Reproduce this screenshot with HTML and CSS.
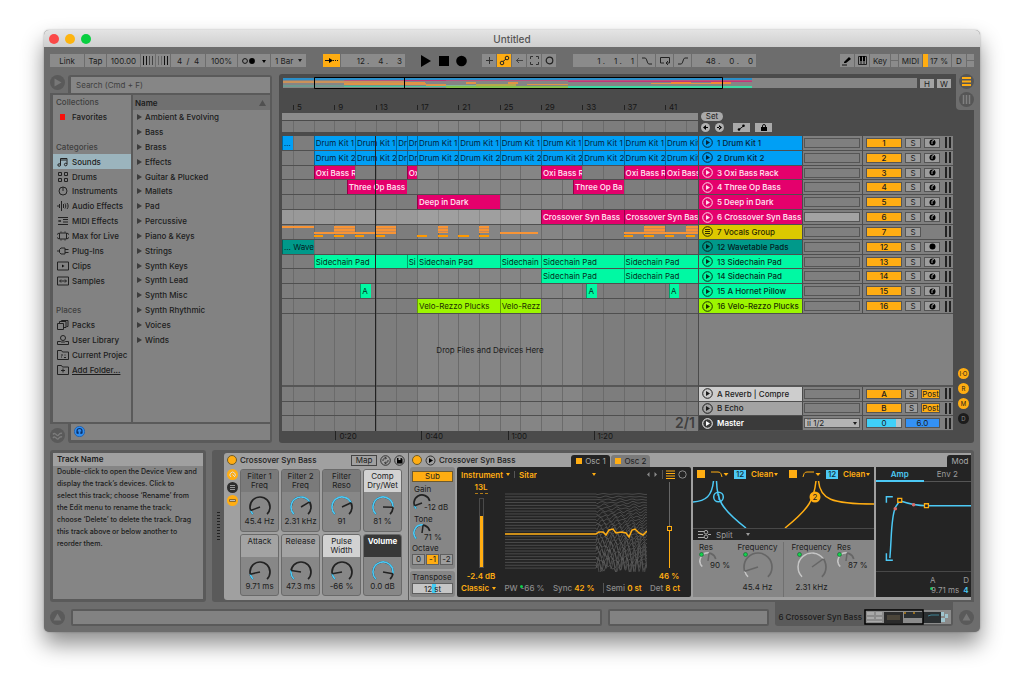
FILE: index.html
```html
<!DOCTYPE html>
<html lang="en">
<head>
    <meta charset="UTF-8">
    <meta name="viewport" content="width=device-width, initial-scale=1.0">
    <title>Untitled</title>
    <link rel="stylesheet" href="styles.css">
</head>
<body>

<div class="window">
    <header class="titlebar">
        <span class="light red"></span>
        <span class="light yellow"></span>
        <span class="light green"></span>
        <h1>Untitled</h1>
    </header>

    <!-- Control bar -->
    <div class="toolbar">
        <div class="group">
            <button class="tool link">Link</button>
            <button class="tool tap">Tap</button>
            <input class="tool tempo" aria-label="Tempo" value="100.00">
            <button class="tool" aria-label="Nudge down"><svg width="10" height="9"><path d="M.5 0v9M3.5 0v9" stroke="#111"/><path d="M6.5 0v9M9.5 0v9" stroke="#444"/></svg></button>
            <button class="tool" aria-label="Nudge up"><svg width="10" height="9"><path d="M.5 0v9M3.5 0v9" stroke="#666"/><path d="M6.5 0v9M9.5 0v9" stroke="#111"/></svg></button>
            <button class="tool link">4&nbsp; /&nbsp; 4</button>
            <button class="tool amount">100%</button>
            <button class="tool metro" aria-label="Metronome"><svg width="26" height="8"><circle cx="4" cy="4" r="2.4" fill="none" stroke="#111"/><circle cx="11" cy="4" r="2.9"/><path d="M21 3h4l-2 3z"/></svg></button>
            <span class="drop tool quant"><select aria-label="Quantization"><option>1 Bar</option></select></span>
        </div>
        <div class="group after-wide">
            <button class="tool follow on" aria-label="Follow"><svg width="13" height="7"><path d="M0 3.5h6" stroke="#111"/><path d="M4 1l4 2.5-4 2.5z"/><path d="M8 3.5h5" stroke="#111" stroke-dasharray="1 1"/></svg></button>
            <button class="tool position">12 .&nbsp;&nbsp;&nbsp; 4 .&nbsp;&nbsp;&nbsp; 3</button>
        </div>
        <div class="group transport">
            <button aria-label="Play"><svg width="12" height="12"><path d="M1 0l10 6-10 6z"/></svg></button>
            <button aria-label="Stop"><svg width="10" height="12"><path d="M0 1h10v10H0z"/></svg></button>
            <button aria-label="Record"><svg width="11" height="12"><circle cx="5.5" cy="6" r="5.3"/></svg></button>
        </div>
        <div class="group after">
            <button class="tool" aria-label="Overdub"><svg width="9" height="9"><path d="M4.5 1v7M1 4.5h7" stroke="#333"/></svg></button>
            <button class="tool on" aria-label="Automation arm"><svg width="11" height="11" fill="none" stroke="#222"><circle cx="3" cy="8" r="1.8"/><circle cx="8" cy="3" r="1.8"/><path d="M4 6.5L7 4"/></svg></button>
            <button class="tool" aria-label="Re-enable automation"><svg width="9" height="9" fill="none" stroke="#444"><path d="M1 4.5h7M4 2L1.5 4.5 4 7"/></svg></button>
            <button class="tool" aria-label="Capture"><svg width="9" height="9" fill="none" stroke="#333"><path d="M.5 3V.5H3M6 .5h2.500V3M8.500 6v2.500H6M3 8.500H.5V6"/></svg></button>
            <button class="tool" aria-label="Session record"><svg width="9" height="9"><circle cx="4.5" cy="4.5" r="3.3" fill="none" stroke="#222" stroke-width="1.200"/></svg></button>
        </div>
        <div class="group after-wide">
            <button class="tool position">1 .&nbsp;&nbsp;&nbsp; 1 .&nbsp;&nbsp;&nbsp; 1</button>
            <button class="tool punch" aria-label="Punch in"><svg width="12" height="8" fill="none" stroke="#222"><path d="M1 1h3c2 0 2 6 4 6h3"/></svg></button>
            <button class="tool punch" aria-label="Loop"><svg width="12" height="9" fill="none" stroke="#222"><path d="M5 7H1.5V1.5h9V7H7.5M9 5L7 7l2 2"/></svg></button>
            <button class="tool punch" aria-label="Punch out"><svg width="12" height="8" fill="none" stroke="#222"><path d="M1 7h3c2 0 2-6 4-6h3"/></svg></button>
            <button class="tool position">48 .&nbsp;&nbsp;&nbsp; 0 .&nbsp;&nbsp;&nbsp; 0</button>
        </div>
        <div class="group end">
            <button class="tool" aria-label="Draw mode"><svg width="10" height="10"><path d="M2 6l5-5 2 2-5 4H2z"/><path d="M0 9h5" stroke="#111"/></svg></button>
            <button class="tool" aria-label="Computer keyboard"><svg width="9" height="9"><path d="M.5.5h8v8h-8zM3 1v7M6 1v7" fill="none" stroke="#222"/><path d="M2 0h2v5H2zM5 0h2v5H5z"/></svg></button>
            <button class="tool key">Key</button>
            <span class="leds"></span>
            <button class="tool midi">MIDI</button>
            <button class="tool cpu">17 %</button>
            <button class="tool">D</button>
            <span class="leds"></span>
        </div>
    </div>

    <main class="upper">
        <!-- Browser -->
        <aside class="browser">
            <div class="browser-top">
                <button class="round" aria-label="Hide browser"><svg width="15" height="15"><circle cx="7.5" cy="7.5" r="7.5" fill="#5a5a5a"/><path d="M4.5 3.5l7 4-7 4z" fill="#777"/></svg></button>
                <div class="search"><input type="search" aria-label="Search" placeholder="Search (Cmd + F)"></div>
            </div>
            <div class="browser-body">
                <ul class="places">
                    <li class="head">Collections</li>
                    <li><a href="#"><svg width="12" height="10"><path d="M3 2h5v6H3z" fill="#f8100c"/></svg>Favorites</a></li>
                    <li></li>
                    <li class="head">Categories</li>
                    <li class="selected"><a href="#"><svg width="12" height="10"><path d="M3.5 8V1.5h6.500V7M3.500 3h6"/><circle cx="2.2" cy="8" r="1.3"/><circle cx="8.7" cy="7.5" r="1.3"/></svg>Sounds</a></li>
                    <li><a href="#"><svg width="12" height="10"><path d="M1.500.5h3v3h-3zM7.500.5h3v3h-3zM1.500 6.500h3v3h-3zM7.500 6.500h3v3h-3z"/></svg>Drums</a></li>
                    <li><a href="#"><svg width="12" height="10"><circle cx="6" cy="5" r="4"/><path d="M6 1v4"/></svg>Instruments</a></li>
                    <li><a href="#"><svg width="12" height="10"><path d="M0 5h2M2.500 3v4M4.500 0v10M6.500 3v4M8 2.500c1 1 1 4 0 5M10 2c1.500 1.500 1.500 4.500 0 6"/></svg>Audio Effects</a></li>
                    <li><a href="#"><svg width="12" height="10"><path d="M1 1.500h10M1 8.500h10M1 5h3M3 4v2M6 3.500h5M6 6h5"/></svg>MIDI Effects</a></li>
                    <li><a href="#"><svg width="12" height="10"><path d="M2.500 2h7v6h-7zM0 3.500l2-1.500M0 6.500L2 8M12 3.500L10 2M12 6.500L10 8M4 .5v1M8 .5v1M4 8.500v1M8 8.500v1"/></svg>Max for Live</a></li>
                    <li><a href="#"><svg width="12" height="10"><path d="M0 5h2.500M4 2h4v6H4L2.500 6.500v-3zM8 3.500h3.500M8 6.500h3.500"/></svg>Plug-Ins</a></li>
                    <li><a href="#"><svg width="12" height="10"><path d="M.5 1h11v8H.5z"/><path d="M5 3.500L7.500 5 5 6.500z" fill="#111"/></svg>Clips</a></li>
                    <li><a href="#"><svg width="12" height="10"><path d="M.5 1h11v8H.5zM2 5h2M4 3.500v3M6 4v2M8 3.500v3M8 5h2"/></svg>Samples</a></li>
                    <li></li>
                    <li class="head">Places</li>
                    <li><a href="#"><svg width="12" height="10"><path d="M.5 3.500h6v6h-6zM2.500 3V1.500h6.500v6H7M4.500 1V.5H11v6H9.500"/></svg>Packs</a></li>
                    <li><a href="#"><svg width="12" height="10"><circle cx="6" cy="3" r="2.5"/><path d="M.5 9.500v-3h3l1 .5h3l1-.5h3v3z"/></svg>User Library</a></li>
                    <li><a href="#"><svg width="12" height="10"><path d="M.5 9.500v-9h4l1 1.500h6v7.500zM4 5h2M7.500 5h1M4 7h1M7 7.500h2"/></svg>Current Projec</a></li>
                    <li><a href="#"><svg width="12" height="10"><path d="M.5 9.500v-9h4l1 1.500h6v7.500zM6 3.500v4M4 5.500h4"/></svg><u>Add Folder...</u></a></li>
                </ul>
                <div class="content">
                    <div class="name-head">Name <svg width="7" height="6"><path d="M3.500 0L7 6H0z" fill="#505050"/></svg></div>
                    <ul class="folders">
                        <li><a href="#">Ambient &amp; Evolving</a></li>
                        <li><a href="#">Bass</a></li>
                        <li><a href="#">Brass</a></li>
                        <li><a href="#">Effects</a></li>
                        <li><a href="#">Guitar &amp; Plucked</a></li>
                        <li><a href="#">Mallets</a></li>
                        <li><a href="#">Pad</a></li>
                        <li><a href="#">Percussive</a></li>
                        <li><a href="#">Piano &amp; Keys</a></li>
                        <li><a href="#">Strings</a></li>
                        <li><a href="#">Synth Keys</a></li>
                        <li><a href="#">Synth Lead</a></li>
                        <li><a href="#">Synth Misc</a></li>
                        <li><a href="#">Synth Rhythmic</a></li>
                        <li><a href="#">Voices</a></li>
                        <li><a href="#">Winds</a></li>
                    </ul>
                </div>
            </div>
            <div class="browser-foot">
                <button class="round" aria-label="Groove pool"><svg width="15" height="15"><circle cx="7.5" cy="7.5" r="7.5" fill="#5a5a5a"/><path d="M3 6.500c2-3 4 2 5 1s2-3 4-2M3 10c2-3 4 2 5 1s2-3 4-2" fill="none" stroke="#7c7c7c" stroke-width="1.4"/></svg></button>
                <div class="preview"><button aria-label="Preview"><svg width="11" height="11"><circle cx="5.5" cy="5.5" r="5.2" fill="#2f8df0" stroke="#1b4f94" stroke-width=".6"/><path d="M3 7.500V5a2.500 2.500 0 015 0v2.500M4 5.500v2.500M7 5.500v2.500" fill="none" stroke="#0b2f66" stroke-width="1.2"/></svg></button></div>
            </div>
        </aside>

        <!-- Arrangement -->
        <section class="arrangement">
            <div class="arr-main">
                <div class="overview-row">
                    <div class="overview"><svg id="overview" viewBox="0 0 634 12" preserveAspectRatio="none"></svg></div>
                    <button class="hw">H</button>
                    <button class="hw">W</button>
                </div>
                <div class="arr-cols">
                    <div class="timeline">
                        <div class="grid-layer" id="grid"></div>
                        <div class="ruler" id="ruler"></div>
                        <div class="scrub"></div>
                        <div class="locators"></div>
                        <div class="lanes" id="lanes"></div>
                        <div class="drop-area"><span>Drop Files and Devices Here</span></div>
                        <div class="returns">
                            <div class="lane"></div>
                            <div class="lane"></div>
                            <div class="lane last">2/1</div>
                        </div>
                        <div class="time-ruler" id="times"></div>
                    </div>
                    <div class="headers">
                        <div class="header-top">
                            <button class="set">Set</button>
                            <div class="set-row">
                                <button aria-label="Previous locator"><svg width="9" height="9"><circle cx="4.5" cy="4.5" r="4.5" fill="#b2b2b2"/><path d="M2 4.500L5 2v5zM4 4h3v1H4z"/></svg></button>
                                <button aria-label="Next locator"><svg width="9" height="9"><circle cx="4.5" cy="4.5" r="4.5" fill="#b2b2b2"/><path d="M7 4.500L4 2v5zM2 4h3v1H2z"/></svg></button>
                                <button class="mini first" aria-label="Automation mode"><svg width="9" height="7"><path d="M2 5.500L6.500 2" stroke="#111"/><circle cx="2" cy="5.5" r="1.3"/><circle cx="6.5" cy="1.7" r="1.3"/></svg></button>
                                <button class="mini" aria-label="Lock envelopes"><svg width="8" height="7"><path d="M1 3h6v4H1z"/><path d="M2.500 3V2a1.500 1.500 0 013 0v1" fill="none" stroke="#111"/></svg></button>
                            </div>
                        </div>
                        <div class="track-list" id="tracks"></div>
                        <div class="header-gap"></div>
                        <div class="return-list" id="returns"></div>
                    </div>
                </div>
            </div>
            <div class="rail">
                <div class="views">
                    <button class="round" aria-label="Arrangement view"><svg width="15" height="15"><circle cx="7.5" cy="7.5" r="7.5" fill="#565656"/><path d="M3 4h9M3 7.500h9M3 11h9" stroke="#ffad12" stroke-width="2"/></svg></button>
                    <button class="round" aria-label="Session view"><svg width="15" height="15"><circle cx="7.5" cy="7.5" r="7.5" fill="#565656"/><path d="M4.500 3v9M7.500 3v9M10.500 3v9" stroke="#808080" stroke-width="1.5"/></svg></button>
                </div>
                <div class="toggles">
                    <button>I·O</button>
                    <button>R</button>
                    <button>M</button>
                    <button class="off">D</button>
                </div>
            </div>
        </section>
    </main>

    <!-- Info view and device chain -->
    <section class="lower">
        <div class="info">
            <h2>Track Name</h2>
            <p>Double-click to open the Device View and display the track’s devices. Click to<br>select this track; choose ‘Rename’ from<br>the Edit menu to rename the track;<br>choose ‘Delete’ to delete the track. Drag<br>this track above or below another to<br>reorder them.</p>
        </div>
        <div class="chain">
            <div class="grip"></div>
            <article class="rack">
                <header class="device-head">
                    <button class="power" aria-label="Device on"></button>
                    <h3>Crossover Syn Bass</h3>
                    <button class="map">Map</button>
                    <button aria-label="Hot-swap"><svg width="11" height="11" fill="none" stroke="#333"><circle cx="5.5" cy="5.5" r="4.800"/><path d="M3 6a2.500 2.500 0 013-3M8 5a2.500 2.500 0 01-3 3M5 2l1.500 1L5 4.500M6 6.500L4.500 8 6 9"/></svg></button>
                    <button aria-label="Save preset"><svg width="11" height="11"><circle cx="5.5" cy="5.5" r="4.800" fill="none" stroke="#333"/><path d="M3 3h4.500l1 1v4.500H3z"/><path d="M4.500 3h2v2h-2z" fill="#aaa"/></svg></button>
                </header>
                <div class="rack-body">
                    <div class="rack-side">
                        <button aria-label="Macros"><svg width="11" height="11"><circle cx="5.5" cy="5.5" r="5.5" fill="#ffad12"/><path d="M4 8a2.700 2.700 0 113.200 0M5.500 5.500L7 7" fill="none" stroke="#ddd"/></svg></button>
                        <button aria-label="Chains"><svg width="11" height="11"><circle cx="5.5" cy="5.5" r="5.5" fill="#2e2e2e"/><path d="M3 3.500h5M3 5.500h5M3 7.500h5" stroke="#999"/></svg></button>
                        <button aria-label="Devices"><svg width="11" height="11"><circle cx="5.5" cy="5.5" r="5.5" fill="#ffad12"/><path d="M2.500 4.500h6v2h-6z" fill="#bbb" stroke="#8a6a30"/></svg></button>
                    </div>
                    <div class="macros" id="macros"></div>
                </div>
            </article>

            <article class="synth">
                <header class="device-head">
                    <button class="power" aria-label="Device on"></button>
                    <button aria-label="Unfold"><svg width="11" height="11"><circle cx="5.5" cy="5.5" r="4.5" fill="none" stroke="#333"/><path d="M4 3l4 2.500L4 8z"/></svg></button>
                    <h3>Crossover Syn Bass</h3>
                    <div class="tabs">
                        <button class="active"><i></i>Osc 1</button>
                        <button><i></i>Osc 2</button>
                    </div>
                    <button class="mod">Mod</button>
                </header>
                <div class="synth-body">
                    <div class="sub-col">
                        <div class="card main-card">
                            <button class="sub">Sub</button>
                            <span class="label">Gain</span>
                            <div class="small-knob"><svg class="knob" width="18" height="18" data-value="0.12" data-sweep="210"></svg><output>-12 dB</output></div>
                            <span class="label">Tone</span>
                            <div class="small-knob"><svg class="knob" width="18" height="18" data-value="0.68" data-sweep="210"></svg><output>71 %</output></div>
                            <span class="label left">Octave</span>
                            <div class="octaves"><button>0</button><button class="on">-1</button><button>-2</button></div>
                        </div>
                        <div class="card low-card">
                            <label for="transpose">Transpose</label>
                            <input id="transpose" value="12 st">
                        </div>
                    </div>

                    <div class="osc">
                        <div class="osc-head">
                            <span class="drop"><select aria-label="Category"><option>Instrument</option></select></span>
                            <span class="bar"></span>
                            <span class="drop wide"><select aria-label="Wavetable"><option>Sitar</option></select></span>
                            <svg width="42" height="9" class="osc-icons"><path d="M0 4.500L2.500 2v5zM10 4.500L7.500 2v5z" fill="#8a8a8a"/><path d="M15.500 0v9" stroke="#555"/><path d="M19 1h9M19 3.500h9M19 6h9M19 8.500h9" stroke="#ffad12"/><circle cx="35.500" cy="4.5" r="3.700" fill="none" stroke="#8a8a8a"/></svg>
                        </div>
                        <div class="osc-main">
                            <div class="fader-col">
                                <output class="pan">13L</output>
                                <input class="fader" type="range" aria-label="Oscillator gain" value="74">
                                <output>-2.4 dB</output>
                            </div>
                            <svg id="waves" viewBox="0 0 142 80" preserveAspectRatio="none"></svg>
                            <div class="fader-col right">
                                <input class="fader thin" type="range" aria-label="Wavetable position" value="46">
                                <output>46 %</output>
                            </div>
                        </div>
                        <div class="osc-foot">
                            <span class="drop"><select aria-label="Effect mode"><option>Classic</option></select></span>
                            <span>PW <i></i>-66 %</span>
                            <span>Sync <b>42 %</b></span>
                            <span class="semi">Semi <b>0 st</b></span>
                            <span>Det <b>8 ct</b></span>
                        </div>
                    </div>

                    <div class="filters">
                        <div class="filter-head">
                            <div><i class="sq"></i><svg width="19" height="8"><path d="M1 2h7c3 0 3 2 4 5" fill="none" stroke="#ffad12"/><path d="M13.500 3h5L16 6z" fill="#ffad12"/></svg><b>12</b><span class="drop"><select aria-label="Filter 1 circuit"><option>Clean</option></select></span></div>
                            <div><i class="sq"></i><svg width="19" height="8"><path d="M1 7c1-3 1-5 4-5h7" fill="none" stroke="#ffad12"/><path d="M13.500 3h5L16 6z" fill="#ffad12"/></svg><b>12</b><span class="drop"><select aria-label="Filter 2 circuit"><option>Clean</option></select></span></div>
                        </div>
                        <svg class="curves" viewBox="0 0 181 47" preserveAspectRatio="none">
                            <g fill="none" stroke="#4cc9f5" stroke-width="1.5"><path d="M0 21C13 20 19 15 20.500 0M23.500 0C24 18 27 27 53 47"/><circle cx="25.5" cy="16" r="4.8"/></g>
                            <path d="M92 47C117 27 121 18 123 0M125.500 0C127 18 138 23 181 23" fill="none" stroke="#ffad12" stroke-width="1.5"/>
                            <circle cx="122" cy="16" r="5.5" fill="#ffad12"/>
                            <text x="25.500" y="19" fill="#4cc9f5">1</text>
                            <text x="122" y="19" fill="#222">2</text>
                        </svg>
                        <div class="routing">
                            <svg width="13" height="9" fill="none" stroke="#aaa"><path d="M0 1.500h6M0 4.500h5M0 7.500h6M10 4.500h3"/><circle cx="8" cy="2.2" r="1.8"/><circle cx="8" cy="6.8" r="1.8"/></svg>
                            <span class="drop"><select aria-label="Routing"><option>Split</option></select></span>
                        </div>
                        <div class="filter-knobs">
                            <div class="fk res"><span>Res</span><div><svg class="knob grey" width="18" height="18" data-value="0.68" data-sweep="210"></svg><output>90 %</output></div></div>
                            <div class="fk freq"><span>Frequency</span><svg class="knob grey" width="30" height="30" data-value="0.1"></svg><output>45.4 Hz</output></div>
                            <div class="fk freq second"><span>Frequency</span><svg class="knob grey" width="30" height="30" data-value="0.7"></svg><output>2.31 kHz</output></div>
                            <div class="fk res"><span>Res</span><div><svg class="knob grey" width="18" height="18" data-value="0.68" data-sweep="210"></svg><output>87 %</output></div></div>
                        </div>
                    </div>

                    <div class="env">
                        <div class="env-tabs"><button class="active">Amp</button><button>Env 2</button></div>
                        <svg class="env-graph" viewBox="0 0 96 90" preserveAspectRatio="xMinYMid slice">
                            <g fill="none" stroke="#4cc9f5" stroke-width="1.5">
                                <path d="M10.500 21v-6H17M10.500 72v7H17"/>
                                <path d="M14 77C16 55 15 34 20 25L24 19C36 23 42 24 51 24H120"/>
                            </g>
                            <g fill="#d96b6b"><circle cx="19.500" cy="27" r="1.8"/><circle cx="38" cy="23" r="1.8"/></g>
                            <g fill="#222" stroke="#ffad12" stroke-width="1.3"><path d="M22 16.500h4v4h-4zM49 22h4v4h-4z"/></g>
                        </svg>
                        <div class="env-vals">
                            <div><span>A</span><output><i></i>9.71 ms</output></div>
                            <div class="cut"><span>D</span><output>4</output></div>
                        </div>
                    </div>
                </div>
            </article>
        </div>
    </section>

    <footer class="status">
        <button class="round" aria-label="Hide info"><svg width="15" height="15"><circle cx="7.5" cy="7.5" r="7.5" fill="#5a5a5a"/><path d="M7.500 3.500l4 7h-8z" fill="#777"/></svg></button>
        <div class="box message"></div>
        <div class="box second"></div>
        <div class="device-tab">
            <span>6 Crossover Syn Bass</span>
            <svg width="88" height="16">
                <path d="M1 1h86v14H1z" fill="#8b8b8b"/>
                <path d="M3 3h7v3H3zM12 3h6v3h-6zM3 8h7v2H3zM12 8h6v2h-6zM3 12h15v1H3z" fill="#a9a9a9"/>
                <path d="M20 3h19v11H20z" fill="#2b2b2b"/>
                <path d="M23 6h13v5H23z" fill="#4b453a"/>
                <path d="M40 3h18v6H40zM59 3h18v11H59z" fill="#2b2f31"/>
                <path d="M40 4h2M49 4h2" stroke="#ffad12"/>
                <path d="M64 7l3-1h8" fill="none" stroke="#3f8294"/>
                <path d="M77 3h3v4h-3zM81 5h3v4h-3zM77 9h4v4h-4z" fill="#9ec3cd"/>
                <path d="M1 1h58v14H1z" fill="none" stroke="#000" stroke-width="1.5"/>
            </svg>
        </div>
        <button class="round" aria-label="Hide devices"><svg width="15" height="15"><circle cx="7.5" cy="7.5" r="7.5" fill="#5a5a5a"/><path d="M7.500 3.500l4 7h-8z" fill="#777"/></svg></button>
    </footer>
</div>

<script src="script.js"></script>
</body>
</html>
```
FILE: styles.css
```css
* {
    box-sizing: border-box;
}

body {
    margin: 0;
    padding: 30px 44px 58px;
    min-height: 100vh;
    display: flex;
    background-color: #fff;
    font-family: Inter, "Liberation Sans", sans-serif;
    font-size: 8px;
    line-height: 10px;
    color: #1c1c1c;
}

button,
input,
select {
    font: inherit;
    color: inherit;
    margin: 0;
    padding: 0;
    border: 0;
    border-radius: 0;
    background: none;
    appearance: none;
    outline: 0;
}

h1,
h2,
h3,
p,
ul {
    margin: 0;
    padding: 0;
    font-size: 8px;
    font-weight: 500;
    list-style: none;
}

a {
    color: inherit;
    text-decoration: none;
}

svg {
    display: block;
    flex: none;
}

.window {
    flex: 1;
    min-width: 0;
    display: flex;
    flex-direction: column;
    background-color: #6d6d6d;
    border-radius: 5px;
    box-shadow: 0 0 2px rgba(0, 0, 0, 0.3), 0 12px 22px rgba(0, 0, 0, 0.45);
}

.titlebar {
    display: flex;
    align-items: center;
    height: 17px;
    padding: 0 5px;
    gap: 6px;
    background: linear-gradient(#e4e4e4, #cecece);
    border-radius: 5px 5px 0 0;
}

.titlebar h1 {
    flex: 1;
    padding-right: 48px;
    text-align: center;
    font-size: 10px;
    color: #555;
}

.light {
    width: 10px;
    height: 10px;
    border-radius: 50%;
}

.light.red {
    background-color: #fb4948;
}

.light.yellow {
    background-color: #fdb40f;
}

.light.green {
    background-color: #08cf40;
}

/* Control bar */
.toolbar {
    display: flex;
    align-items: center;
    height: 27px;
    padding: 0 6px;
}

.group {
    display: flex;
    gap: 1px;
}

.group.after {
    margin-left: 15px;
}

.group.after-wide {
    margin-left: 17px;
}

.group.end {
    margin-left: auto;
}

.group.transport {
    margin-left: 15px;
    gap: 7px;
}

.tool {
    display: flex;
    align-items: center;
    justify-content: center;
    width: 14px;
    height: 13px;
    background-color: #8b8b8b;
    text-align: center;
}

.tool.on {
    background-color: #ffad12;
}

.tool.link {
    width: 34px;
}

.tool.tap {
    width: 21px;
}

.tool.tempo {
    width: 33px;
}

.tool.amount {
    width: 31px;
}

.tool.metro {
    width: 32px;
}

.tool.quant {
    width: 35px;
    padding: 0 4px;
}

.tool.follow,
.tool.punch {
    width: 17px;
}

.tool.position {
    width: 64px;
    justify-content: flex-end;
    padding-right: 3px;
}

.tool.key {
    width: 20px;
}

.tool.midi {
    width: 23px;
}

.tool.cpu {
    width: 28px;
    border-left: 5px solid #ffad12;
    justify-content: flex-end;
    padding-right: 3px;
}

.leds {
    width: 7px;
    height: 13px;
    background: linear-gradient(#8b8b8b 6px, #6d6d6d 6px, #6d6d6d 7px, #8b8b8b 7px);
}

.drop {
    display: inline-flex;
    align-items: center;
    gap: 2px;
}

.drop::after {
    content: "";
    border: 2px solid transparent;
    border-top: 3px solid;
    border-bottom: 0;
    margin-left: auto;
}

/* Browser */
.upper {
    flex: 1;
    min-height: 0;
    display: flex;
    gap: 7px;
    padding: 0 6px;
}

.browser {
    width: 222px;
    display: flex;
    flex-direction: column;
    padding-top: 1px;
}

.round {
    width: 15px;
    height: 15px;
}

.browser-top,
.browser-foot {
    display: flex;
    gap: 3px;
}

.search {
    flex: 1;
    height: 18px;
    padding: 2px 2px 0 3px;
    background-color: #5a5a5a;
    border-radius: 3px 3px 0 0;
}

.search input {
    width: 100%;
    height: 16px;
    padding-left: 5px;
    background-color: #868686;
}

.search input::placeholder {
    color: #3f3f3f;
}

.browser-body {
    flex: 1;
    display: flex;
    border: solid #5a5a5a;
    border-width: 2px 2px 2px 3px;
    background-color: #828282;
}

.places {
    width: 78px;
    height: 282px;
    display: grid;
    grid-template-rows: repeat(19, 1fr);
}

.places li,
.folders li {
    display: flex;
    align-items: center;
    min-height: 0;
}

.places li {
    padding-left: 4px;
    overflow: hidden;
    white-space: nowrap;
}

.places .head {
    padding-left: 3px;
    color: #3f3f3f;
}

.places .selected {
    background-color: #9bb4bd;
}

.places a {
    display: flex;
    align-items: center;
    gap: 3px;
}

.places svg {
    fill: none;
    stroke: #222;
    stroke-width: 1;
}

.places svg [fill] {
    stroke: none;
}

.content {
    flex: 1;
    border-left: 2px solid #5a5a5a;
}

.name-head {
    display: flex;
    align-items: center;
    justify-content: space-between;
    height: 15px;
    padding: 0 4px 0 2px;
    background-color: #707070;
    font-weight: 600;
}

.folders {
    height: 237px;
    display: grid;
    grid-template-rows: repeat(16, 1fr);
}

.folders a {
    display: flex;
    align-items: center;
    gap: 3px;
    padding-left: 4px;
}

.folders a::before {
    content: "";
    border: 3px solid transparent;
    border-left: 5px solid #3c3c3c;
    border-right: 0;
}

.browser-foot {
    height: 19px;
    align-items: flex-end;
}

.preview {
    flex: 1;
    height: 19px;
    padding: 2px 3px;
    background-color: #828282;
    border: solid #5a5a5a;
    border-width: 0 2px 3px 3px;
    border-radius: 0 0 3px 3px;
}

/* Arrangement */
.arrangement {
    flex: 1;
    min-width: 0;
    display: flex;
    padding-left: 3px;
    background-color: #4b4b4b;
    border-radius: 3px;
}

.arr-main {
    flex: 1;
    min-width: 0;
    display: flex;
    flex-direction: column;
    padding-right: 3px;
}

.overview-row {
    display: flex;
    align-items: center;
    gap: 3px;
    height: 17px;
    padding: 1px 2px 0 1px;
}

.overview {
    flex: 1;
    min-width: 0;
}

.overview svg {
    width: 100%;
    height: 12px;
}

.hw {
    width: 14px;
    height: 9px;
    background-color: #a3a3a3;
}

.arr-cols {
    flex: 1;
    display: flex;
    gap: 1px;
}

.timeline {
    position: relative;
    flex: 1;
    min-width: 0;
    display: flex;
    flex-direction: column;
}

.timeline > div {
    position: relative;
}

.timeline > .grid-layer {
    position: absolute;
    top: 30px;
    bottom: 12px;
    left: 0;
    right: 0;
    background-color: #7d7d7d;
    overflow: hidden;
}

.grid-layer div {
    position: absolute;
    top: 0;
    bottom: 0;
    border-left: 1px solid #6b6b6b;
}

.grid-layer .shade {
    border: 0;
    background-color: #858585;
}

.ruler {
    height: 22px;
}

.ruler span,
.time-ruler span {
    position: absolute;
    padding-left: 3px;
    border-left: 1px solid #222;
    line-height: 5px;
    color: #161616;
}

.ruler span {
    bottom: 3px;
}

.scrub {
    height: 8px;
    background-color: #8b8b8b;
    border-bottom: 1px solid #4b4b4b;
}

.locators {
    height: 15px;
    border-bottom: 4px solid #4b4b4b;
}

.lanes {
    height: 178px;
    display: grid;
    grid-template-rows: repeat(12, 1fr);
}

.lane {
    position: relative;
    min-height: 0;
    overflow: hidden;
    border-bottom: 1px solid #4f4f4f;
}

.lane.selected {
    background-color: rgba(255, 255, 255, 0.22);
}

.clip {
    position: absolute;
    top: 0;
    bottom: 0;
    padding: 2px 0 0 1px;
    overflow: hidden;
    white-space: nowrap;
    border-left: 1px solid rgba(0, 0, 0, 0.35);
}

.blue {
    background-color: #009ff5;
    color: #06243a;
}

.pink {
    background-color: #e4006c;
    color: #ffdbe9;
    font-weight: 600;
}

.teal {
    background-color: #00998a;
    color: #04211f;
}

.mint {
    background-color: #00f9a3;
    color: #05301f;
}

.lime {
    background-color: #9cf600;
    color: #1c3000;
}

.mustard {
    background-color: #dcc900;
    color: #2e2a00;
}

.pale {
    background-color: #cdcdcd;
}

.silver {
    background-color: #a3a3a3;
}

.dark {
    background-color: #3a3a3a;
    color: #fff;
    font-weight: 700;
}

.note {
    position: absolute;
    height: 2px;
    background-color: #f79436;
}

.note.block {
    height: 7px;
    background: linear-gradient(#f79436 2px, #c98a55 2px, #c98a55 3px, #f79436 3px, #f79436 5px, #c98a55 5px, #c98a55 6px, #f79436 6px);
}

.note.low {
    background-color: #ff9900;
}

.drop-area {
    flex: 1;
    display: flex;
    align-items: center;
    justify-content: center;
    border-bottom: 2px solid #565656;
}

.returns,
.return-list {
    height: 44px;
    display: grid;
    grid-template-rows: repeat(3, 1fr);
}

.returns .last {
    border-bottom: 0;
    padding-right: 3px;
    text-align: right;
    font-size: 14px;
    font-weight: 600;
    line-height: 14px;
    color: #3f3f3f;
}

.timeline > .playhead {
    position: absolute;
    top: 45px;
    bottom: 12px;
    border-left: 1px solid #222;
}

.time-ruler {
    height: 12px;
}

.time-ruler span {
    top: 0;
    padding-top: 2px;
    line-height: 7px;
}

/* Track headers */
.headers {
    width: 254px;
    display: flex;
    flex-direction: column;
    padding-bottom: 12px;
}

.header-top {
    height: 45px;
    display: flex;
    flex-direction: column;
    justify-content: flex-end;
    align-items: flex-start;
    gap: 2px;
    padding: 0 0 4px 2px;
}

.set {
    width: 22px;
    height: 9px;
    line-height: 9px;
    border-radius: 5px;
    background-color: #a9a9a9;
}

.set-row {
    display: flex;
    align-items: center;
    gap: 5px;
}

.mini {
    display: flex;
    align-items: center;
    justify-content: center;
    width: 17px;
    height: 9px;
    background-color: #a9a9a9;
}

.mini.first {
    margin-left: 4px;
}

.track-list {
    height: 178px;
    display: grid;
    grid-template-rows: repeat(12, 1fr);
}

.track {
    display: grid;
    grid-template-columns: 103px 59px 1fr;
    gap: 1px;
    min-height: 0;
    border-bottom: 1px solid #4f4f4f;
}

.track > div {
    display: flex;
    align-items: center;
    min-width: 0;
}

.track .name {
    gap: 4px;
    padding-left: 3px;
    overflow: hidden;
    white-space: nowrap;
    font-weight: 500;
}

.track .pink,
.track .dark {
    font-weight: 600;
}

.io {
    padding: 0 2px 0 1px;
    background-color: #7f7f7f;
}

.io span {
    flex: 1;
    height: 10px;
    border: 1px solid #555;
}

.io.lit span {
    background-color: #a3a3a3;
}

.io .drop {
    display: flex;
    padding: 0 2px;
    background-color: #b4b4b4;
}

.mix {
    gap: 3px;
    padding-left: 3px;
    background-color: #7f7f7f;
}

.mix button,
.mix input {
    width: 16px;
    height: 10px;
    line-height: 8px;
    border: 1px solid #555;
    background-color: #9d9d9d;
    text-align: center;
}

.mix button {
    display: flex;
    align-items: center;
    justify-content: center;
}

.mix .act {
    width: 36px;
    background-color: #ffad12;
    font-weight: 500;
}

.mix .solo-small {
    width: 13px;
}

.mix .post {
    width: 19px;
    background-color: #ffad12;
}

.mix .cue {
    width: 36px;
    background: linear-gradient(90deg, #3fd0f8 84%, #b8c4c8 84%);
}

.mix .vol {
    width: 35px;
    background-color: #3391f5;
}

.meter {
    width: 6px;
    height: 11px;
    margin-left: auto;
    margin-right: 2px;
    border: solid #222;
    border-width: 0 2px;
}

.header-gap {
    flex: 1;
    background-color: #828282;
    border-bottom: 2px solid #565656;
}

.rail {
    width: 18px;
    display: flex;
    flex-direction: column;
    padding-bottom: 19px;
}

.views {
    height: 36px;
    display: flex;
    flex-direction: column;
    gap: 3px;
    padding-left: 3px;
    background-color: #6d6d6d;
    border-radius: 0 0 0 4px;
}

.toggles {
    display: flex;
    flex-direction: column;
    gap: 4px;
    margin-top: auto;
    padding-left: 2px;
}

.toggles button {
    width: 11px;
    height: 11px;
    border-radius: 50%;
    font-size: 6px;
    line-height: 11px;
    background-color: #ffad12;
}

.toggles .off {
    background-color: #1c1c1c;
    color: #888;
}

/* Info view */
.lower {
    display: flex;
    gap: 6px;
    height: 152px;
    margin-top: 7px;
    padding: 0 6px;
}

.info {
    width: 156px;
    border: 3px solid #5a5a5a;
    border-radius: 3px;
    background-color: #858585;
}

.info h2 {
    height: 13px;
    padding-left: 4px;
    line-height: 13px;
    font-weight: 600;
    background-color: #a0a0a0;
}

.info p {
    padding-left: 4px;
    font-size: 7px;
    line-height: 12px;
    white-space: nowrap;
    width: 146px;
    white-space: normal;
}

/* Device chain */
.chain {
    flex: 1;
    min-width: 0;
    display: flex;
    gap: 1px;
    padding: 3px 3px 2px 3px;
    background-color: #5a5a5a;
    border-radius: 3px 3px 0 3px;
}

.grip {
    width: 3px;
    height: 30px;
    margin: auto 3px auto 2px;
    background: repeating-linear-gradient(#222 0 1px, transparent 1px 3px);
}

.rack,
.synth {
    display: flex;
    flex-direction: column;
    background-color: #a0a0a0;
}

.rack {
    width: 184px;
    border-radius: 3px 0 0 3px;
}

.synth {
    flex: 1;
    min-width: 0;
    overflow: hidden;
}

.device-head {
    display: flex;
    align-items: center;
    gap: 3px;
    height: 14px;
    padding: 0 3px;
}

.device-head h3 {
    white-space: nowrap;
}

.power {
    width: 10px;
    height: 10px;
    border: 1px solid #6b5a2c;
    border-radius: 50%;
    background-color: #ffad12;
}

.map {
    width: 26px;
    height: 11px;
    line-height: 9px;
    margin-left: auto;
    border: 1px solid #444;
}

.rack-body {
    flex: 1;
    display: flex;
    gap: 2px;
    padding: 2px 6px 4px 3px;
}

.rack-side {
    display: flex;
    flex-direction: column;
    gap: 2px;
}

.macros {
    flex: 1;
    display: grid;
    grid-template-columns: repeat(4, 1fr);
    gap: 2px;
}

.macro {
    display: flex;
    flex-direction: column;
    align-items: center;
    border: 1px solid #6a6a6a;
    border-radius: 3px;
    background-color: #878787;
    overflow: hidden;
}

.macro span {
    width: 100%;
    height: 22px;
    padding-top: 2px;
    text-align: center;
    line-height: 9px;
    white-space: pre-line;
    background-color: #7a7a7a;
}

.macro.light-head span {
    background-color: #a3a3a3;
}

.macro.white-head span {
    background-color: #d2d2d2;
}

.macro.dark-head span {
    background-color: #383838;
    color: #fff;
    font-weight: 700;
}

.macro svg {
    margin-top: 4px;
}

.macro output {
    margin-top: -2px;
}

/* Synth */
.synth .device-head {
    padding: 0 0 0 3px;
}

.tabs {
    display: flex;
    align-items: flex-end;
    gap: 1px;
    height: 14px;
    margin-left: 53px;
}

.tabs button {
    display: flex;
    align-items: center;
    justify-content: center;
    gap: 3px;
    width: 39px;
    height: 12px;
    border-radius: 3px 3px 0 0;
    background-color: #7b7b7b;
}

.tabs .active {
    background-color: #242424;
    color: #aaa;
}

.tabs i,
.sq {
    width: 6px;
    height: 6px;
    background-color: #ffad12;
}

.mod {
    width: 24px;
    height: 12px;
    margin: 2px 0 0 auto;
    padding-left: 2px;
    border-radius: 3px 0 0 0;
    background-color: #242424;
    color: #aaa;
}

.synth-body {
    flex: 1;
    display: flex;
    gap: 2px;
    padding: 0 0 3px 1px;
}

.sub-col {
    width: 45px;
    display: flex;
    flex-direction: column;
    gap: 2px;
}

.card {
    display: flex;
    flex-direction: column;
    padding: 4px 2px 3px;
    border-radius: 3px;
    background-color: #868686;
}

.main-card {
    flex: 1;
}

.low-card {
    padding-top: 1px;
}

.card .sub {
    height: 11px;
    line-height: 9px;
    border: 1px solid #6d5a30;
    background-color: #ffad12;
}

.card .label {
    padding: 2px 0 0 2px;
}

.card .left {
    padding: 1px 0 0;
}

.small-knob {
    display: flex;
    align-items: flex-end;
    height: 18px;
    padding-left: 1px;
}

.small-knob output,
.fk.res output {
    margin-left: -7px;
    white-space: nowrap;
}

.octaves {
    display: flex;
    gap: 1px;
    margin-top: 1px;
}

.octaves button {
    flex: 1;
    height: 11px;
    line-height: 9px;
    border: 1px solid #5f5f5f;
    background-color: #9d9d9d;
}

.octaves .on {
    background-color: #ffad12;
}

#transpose {
    width: 100%;
    height: 11px;
    margin-top: 1px;
    border: 1px solid #5f5f5f;
    text-align: center;
    background: linear-gradient(90deg, #c6c6c6 49%, #43cbf5 49%, #43cbf5 59%, #c6c6c6 59%);
}

.osc {
    width: 234px;
    display: flex;
    flex-direction: column;
    border-radius: 2px;
    background-color: #242424;
    color: #ffad12;
    font-weight: 600;
}

.osc-head {
    display: flex;
    align-items: center;
    gap: 4px;
    height: 15px;
    padding: 0 2px 0 4px;
}

.osc-head .bar {
    width: 1px;
    height: 7px;
    background-color: #555;
}

.osc-head .wide {
    width: 77px;
}

.osc-icons {
    margin-left: auto;
}

.osc-main {
    flex: 1;
    display: flex;
    min-height: 0;
}

.fader-col {
    width: 48px;
    display: flex;
    flex-direction: column;
    align-items: center;
    justify-content: space-between;
    padding-bottom: 1px;
}

.fader-col.right {
    width: 44px;
}

.fader-col .pan {
    padding-bottom: 1px;
    border-bottom: 1px dashed #b27c18;
}

.fader {
    writing-mode: vertical-lr;
    direction: rtl;
    width: 5px;
    height: 70px;
    border: 1px solid #4a4a4a;
    background: linear-gradient(#242424 26%, #ffad12 26%);
}

.fader::-webkit-slider-thumb {
    appearance: none;
    width: 3px;
    height: 1px;
    background-color: #ffad12;
}

.fader.thin {
    height: 86px;
    border: 0;
    background: linear-gradient(#666 54%, #ffad12 54%) center / 1px 100% no-repeat;
}

.fader.thin::-webkit-slider-thumb {
    width: 5px;
    height: 5px;
    border: 1px solid #ffad12;
    background-color: #242424;
}

#waves {
    flex: 1;
    min-width: 0;
    height: 80px;
    margin-top: 10px;
}

.osc-foot {
    display: flex;
    align-items: center;
    justify-content: space-between;
    height: 15px;
    padding: 0 11px 3px 4px;
    color: #8c8c8c;
    font-weight: 500;
}

.osc-foot b,
.osc-foot .drop {
    color: #ffad12;
    font-weight: 600;
}

.osc-foot .semi {
    padding-left: 2px;
    border-left: 1px solid #555;
}

.osc-foot i,
.env-vals i {
    display: inline-block;
    width: 3px;
    height: 3px;
    border-radius: 50%;
    background-color: #12d04c;
    vertical-align: 3px;
    margin-right: -2px;
}

.filters {
    width: 181px;
    display: flex;
    flex-direction: column;
    background-color: #242424;
}

.filter-head {
    display: grid;
    grid-template-columns: 92px 1fr;
    height: 14px;
    padding-left: 4px;
    color: #ffad12;
    font-weight: 600;
}

.filter-head div {
    display: flex;
    align-items: center;
    gap: 5px;
}

.filter-head .sq {
    width: 8px;
    height: 8px;
}

.filter-head b {
    width: 12px;
    height: 9px;
    line-height: 9px;
    text-align: center;
    font-weight: 500;
    color: #10303c;
    background-color: #4cc9f5;
}

.filter-head .drop {
    gap: 0;
}

.curves {
    width: 100%;
    height: 47px;
}

.curves text {
    font-size: 8px;
    text-anchor: middle;
}

.routing {
    display: flex;
    align-items: center;
    gap: 5px;
    height: 12px;
    padding-left: 5px;
    border-top: 1px solid #484848;
    color: #9c9c9c;
}

.routing .drop {
    width: 34px;
}

.filter-knobs {
    flex: 1;
    display: flex;
    padding: 2px 3px 0;
    background-color: #868686;
}

.fk {
    display: flex;
    flex-direction: column;
    padding-left: 3px;
}

.fk.res {
    width: 36px;
}

.fk.freq {
    width: 51px;
    align-items: center;
    padding: 0;
}

.fk.second {
    padding-left: 5px;
    border-left: 1px solid #707070;
}

.fk.res div {
    display: flex;
    align-items: flex-end;
}

.env {
    flex: 1;
    min-width: 0;
    display: flex;
    flex-direction: column;
    overflow: hidden;
    background-color: #242424;
    color: #9c9c9c;
}

.env-tabs {
    display: grid;
    grid-template-columns: 1fr 1fr;
    height: 15px;
}

.env-tabs button {
    border-bottom: 1px solid #555;
}

.env-tabs .active {
    color: #4cc9f5;
    border-bottom: 2px solid #4cc9f5;
    font-weight: 600;
}

.env-graph {
    width: 100%;
    height: 90px;
    border-bottom: 1px solid #484848;
}

.env-vals {
    display: flex;
    gap: 4px;
    padding: 3px 0 0 54px;
    white-space: nowrap;
}

.env-vals div {
    display: flex;
    flex-direction: column;
}

.env-vals .cut output {
    color: #4cc9f5;
    font-weight: 600;
}

/* Status bar */
.status {
    display: flex;
    align-items: flex-start;
    height: 30px;
    padding: 0 6px;
}

.status .round {
    margin-top: 8px;
}

.box {
    height: 17px;
    margin-top: 7px;
    border: 2px solid #5a5a5a;
    border-radius: 2px;
    background-color: #828282;
}

.box.message {
    flex: 1;
    margin-left: 6px;
}

.box.second {
    width: 161px;
    margin-left: 6px;
}

.device-tab {
    display: flex;
    align-items: center;
    gap: 2px;
    height: 24px;
    margin: 0 6px;
    padding: 6px 1px 0 3px;
    border-radius: 0 0 3px 3px;
    background-color: #5a5a5a;
    white-space: nowrap;
    font-weight: 500;
}
```
FILE: script.js
```js
// Visible range of the arrangement, in bars
const FIRST = 3.93;
const LAST = 44.2;

function left(bar) {
    return (bar - FIRST) / (LAST - FIRST) * 100;
}

function span(from, to) {
    return `left:${left(from)}%;width:${left(to) - left(from)}%`;
}

const drum = name => [[7, 11, name], [11, 15, name], [15, 16, "Dr"], [16, 17, "Dr"], [17, 21, name], [21, 25, name],
    [25, 29, name], [29, 33, name], [33, 37, name], [37, 41, name], [41, 44.2, "Drum Kit"]];

const tracks = [
    { num: 1, name: "1 Drum Kit 1", color: "blue", clips: [[3.93, 5, "..."], ...drum("Drum Kit 1")] },
    { num: 2, name: "2 Drum Kit 2", color: "blue", clips: drum("Drum Kit 2") },
    { num: 3, name: "3 Oxi Bass Rack", color: "pink", clips: [[7, 11, "Oxi Bass R"], [16, 17, "Ox"], [29, 33, "Oxi Bass R"], [37, 41, "Oxi Bass R"], [41, 44.2, "Oxi Bass"]] },
    { num: 4, name: "4 Three Op Bass", color: "pink", clips: [[10.2, 16, "Three Op Bass"], [32.1, 37, "Three Op Ba"]] },
    { num: 5, name: "5 Deep in Dark", color: "pink", clips: [[17, 25, "Deep in Dark"]] },
    { num: 6, name: "6 Crossover Syn Bass", color: "pink", selected: true, clips: [[29, 37, "Crossover Syn Bass"], [37, 44.2, "Crossover Syn Bass"]] },
    { num: 7, name: "7 Vocals Group", color: "mustard", group: true, clips: [] },
    { num: 12, name: "12 Wavetable Pads", color: "teal", armed: true, clips: [[3.93, 7, "... Wave"]] },
    { num: 13, name: "13 Sidechain Pad", color: "mint", clips: [[7, 16, "Sidechain Pad"], [16, 17, "Si"], [17, 25, "Sidechain Pad"], [25, 29, "Sidechain"], [29, 37, "Sidechain Pad"], [37, 44.2, "Sidechain Pad"]] },
    { num: 14, name: "14 Sidechain Pad", color: "mint", clips: [[29, 37, "Sidechain Pad"], [37, 44.2, "Sidechain Pad"]] },
    { num: 15, name: "15 A Hornet Pillow", color: "mint", clips: [[11.5, 12.5, "A"], [33.4, 34.4, "A"], [41.4, 42.4, "A I"]] },
    { num: 16, name: "16 Velo-Rezzo Plucks", color: "lime", clips: [[17, 25, "Velo-Rezzo Plucks"], [25, 29, "Velo-Rezz"]] }
];

// Group track preview: from, to, top, kind
const notes = [
    [3.93, 7, 1, ""], [7, 15, 7, ""], [9, 11, 1, "block"], [13, 15, 1, "block"],
    [7, 7.9, 10, "low"], [9, 9.9, 10, "low"], [11, 11.9, 10, "low"], [13, 13.9, 10, "low"],
    [17, 18, 10, "low"], [19, 20, 1, "block"], [19, 20, 10, "low"], [21, 22, 10, "low"], [23, 24, 1, "block"], [23, 24, 10, "low"],
    [25, 28.7, 7, ""], [37, 44.2, 7, ""], [39, 41, 1, "block"], [43, 44.2, 1, "block"],
    [37, 37.9, 10, "low"], [39, 39.9, 10, "low"], [41, 41.9, 10, "low"], [43, 43.9, 10, "low"]
];

// Grid lines every two bars
let grid = `<div class="shade" style="${span(17, 33)}"></div>`;
for (let bar = 5; bar < LAST; bar += 2) {
    grid += `<div style="left:${left(bar)}%"></div>`;
}
document.getElementById("grid").innerHTML = grid;

let ruler = "";
for (let bar = 5; bar <= 41; bar += 4) {
    ruler += `<span style="left:${left(bar)}%">${bar}</span>`;
}
document.getElementById("ruler").innerHTML = ruler;

document.getElementById("times").innerHTML = ["0:20", "0:40", "1:00", "1:20"]
    .map((t, i) => `<span style="left:${left(9.1 + i * 8.33)}%">${t}</span>`).join("");

document.getElementById("lanes").innerHTML = tracks.map(track => {
    let items = track.clips.map(([from, to, text]) => `<div class="clip ${track.color}" style="${span(from, to)}">${text}</div>`).join("");
    if (track.group) {
        items = notes.map(([from, to, top, kind]) => `<div class="note ${kind}" style="${span(from, to)};top:${top}px"></div>`).join("");
    }
    return `<div class="lane ${track.selected ? "selected" : ""}">${items}</div>`;
}).join("");

const playhead = document.createElement("div");
playhead.className = "playhead";
playhead.style.left = left(12.93) + "%";
document.querySelector(".timeline").append(playhead);

// Track headers
function fold(group) {
    const shape = group ? '<path d="M3 3.5h5M3 5.5h5M3 7.5h5" stroke="currentColor"/>' : '<path d="M4 3l4 2.5L4 8z" fill="currentColor"/>';
    return `<svg width="11" height="11"><circle cx="5.5" cy="5.5" r="4.8" fill="none" stroke="currentColor"/>${shape}</svg>`;
}

const armIcon = '<svg width="7" height="7"><circle cx="3.5" cy="3.5" r="3"/><path d="M3 5V2l2-.5" fill="none" stroke="#999"/></svg>';
const armDot = '<svg width="7" height="7"><circle cx="3.5" cy="3.5" r="3"/></svg>';

document.getElementById("tracks").innerHTML = tracks.map(track => `
    <div class="track">
        <div class="name ${track.color}">${fold(track.group)}${track.name}</div>
        <div class="io ${track.selected ? "lit" : ""}"><span></span></div>
        <div class="mix">
            <button class="act">${track.num}</button>
            <button>S</button>
            ${track.group ? "" : `<button aria-label="Arm">${track.armed ? armDot : armIcon}</button>`}
            <span class="meter"></span>
        </div>
    </div>`).join("");

document.getElementById("returns").innerHTML = [["A", "A Reverb | Compre", "pale"], ["B", "B Echo", "silver"]].map(([id, name, color]) => `
    <div class="track">
        <div class="name ${color}">${fold()}${name}</div>
        <div class="io"><span></span></div>
        <div class="mix">
            <button class="act">${id}</button>
            <button class="solo-small">S</button>
            <button class="post">Post</button>
            <span class="meter"></span>
        </div>
    </div>`).join("") + `
    <div class="track">
        <div class="name dark">${fold()}Master</div>
        <div class="io"><span class="drop"><select aria-label="Master output"><option>ii 1/2</option></select></span></div>
        <div class="mix">
            <input class="cue" aria-label="Pan" value="0">
            <input class="vol" aria-label="Volume" value="6.0">
            <span class="meter"></span>
        </div>
    </div>`;

// Overview strip
const strips = [
    [0, 469, 1, 2, "#2b8fc9"], [0, 122, 4, 2, "#c9925a"], [0, 122, 8, 2, "#6d9a90"], [61, 408, 3, 1, "#b5567e"],
    [122, 41, 3, 1, "#c2357a"], [61, 82, 6, 2, "#df9347"], [143, 20, 7, 2, "#df9347"], [163, 50, 8, 1, "#7fb894"],
    [122, 20, 5, 2, "#df9347"], [183, 10, 5, 2, "#df9347"], [225, 10, 5, 2, "#df9347"], [193, 40, 7, 2, "#b5a94b"],
    [163, 122, 9, 2, "#83c14f"], [61, 102, 9, 1, "#47c79c"], [244, 41, 7, 1, "#df9347"], [285, 184, 4, 1, "#c2357a"],
    [285, 184, 9, 2, "#3ddaa2"], [368, 80, 6, 1, "#df9347"], [388, 20, 5, 2, "#f08a35"], [428, 20, 5, 2, "#f08a35"]
];
document.getElementById("overview").innerHTML =
    '<path d="M0 1h634v10H0z" fill="#858585"/>' +
    strips.map(([x, w, y, h, c]) => `<rect x="${x}" y="${y}" width="${w}" height="${h}" fill="${c}"/>`).join("") +
    '<path d="M31.5.5h408v11h-408zM121.5 0v12" fill="none" stroke="#000"/>';

// Knobs
function drawKnob(svg) {
    const size = +svg.getAttribute("width");
    const c = size / 2;
    const r = c - 1;
    const value = +svg.dataset.value;
    const sweep = +(svg.dataset.sweep || 270);
    const grey = svg.classList.contains("grey");
    const point = (v, radius) => {
        const a = (135 + v * sweep) * Math.PI / 180;
        return `${(c + radius * Math.cos(a)).toFixed(2)} ${(c + radius * Math.sin(a)).toFixed(2)}`;
    };
    const arc = (from, to, color) => `<path d="M${point(from, r)}A${r} ${r} 0 ${(to - from) * sweep > 180 ? 1 : 0} 1 ${point(to, r)}" fill="none" stroke="${color}" stroke-width="1.7"/>`;
    svg.innerHTML = arc(0, 1, grey ? "#666" : "#222") + arc(0, value, grey ? "#c4c4c4" : "#4cc9f5") +
        `<path d="M${c} ${c}L${point(value, r)}" stroke="${grey ? "#666" : "#222"}" stroke-width="1.5"/>` +
        (grey ? '<circle cx="2.5" cy="2.5" r="2" fill="#12d04c" stroke="#1d5c30" stroke-width=".6"/>' : "");
}

const macros = [
    ["Filter 1\nFreq", 0.09, "45.4 Hz", ""], ["Filter 2\nFreq", 0.72, "2.31 kHz", ""], ["Filter\nReso", 0.74, "91", ""], ["Comp\nDry/Wet", 0.84, "81 %", "white-head"],
    ["Attack", 0.12, "9.71 ms", "light-head"], ["Release", 0.2, "47.3 ms", "light-head"], ["Pulse\nWidth", 0.13, "-66 %", "white-head"], ["Volume", 0.87, "0.0 dB", "dark-head"]
];
document.getElementById("macros").innerHTML = macros.map(([name, value, text, head]) => `
    <div class="macro ${head}"><span>${name}</span><svg class="knob" width="22" height="22" data-value="${value}"></svg><output>${text}</output></div>`).join("");

document.querySelectorAll(".knob").forEach(drawKnob);

// Wavetable frames: flat on the left, moving on the right
let waves = "";
for (let i = 0; i < 27; i++) {
    const y = 2 + i * 2.85;
    const amp = 0.5 + i * 0.17;
    let d = `M0 ${y}H91`;
    for (let x = 92; x <= 142; x += 1) {
        const wobble = Math.sin(x * 0.42 + i * 0.2) * 0.5 + Math.sin(x * (0.5 + i * 0.035) + i) * 0.7 + Math.sin(x * 1.3 + i * 0.6) * i * 0.02;
        d += `L${x} ${(y + wobble * amp).toFixed(2)}`;
    }
    waves += `<path d="${d}" fill="none" stroke="#5c5c5c" stroke-width=".7"/>`;
}
waves += '<path d="M0 42H91L94 40L98 40L101 43L104 38L108 37L111 41L117 40L121 41L124 45L127 38L130 37L134 41L138 43L142 39" fill="none" stroke="#ffad12" stroke-width="1.5"/>';
document.getElementById("waves").innerHTML = waves;
```
